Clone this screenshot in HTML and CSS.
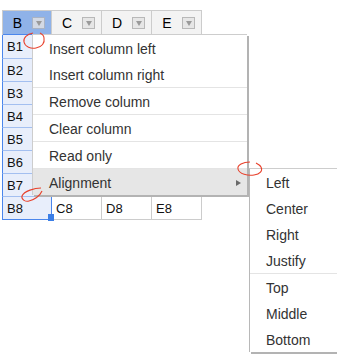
FILE: index.html
```html
<!DOCTYPE html>
<html lang="en">
<head>
    <meta charset="UTF-8">
    <meta name="viewport" content="width=device-width, initial-scale=1.0">
    <title>Sheet column menu</title>
    <link rel="stylesheet" href="styles.css">
</head>
<body>
    <div class="sheet">
        <div class="grid">
            <div class="head selected"><span>B</span><i class="filter"></i></div>
            <div class="head"><span>C</span><i class="filter"></i></div>
            <div class="head"><span>D</span><i class="filter"></i></div>
            <div class="head"><span>E</span><i class="filter"></i></div>

            <div class="cell sel top">B1</div><div class="cell"></div><div class="cell"></div><div class="cell"></div>
            <div class="cell sel">B2</div><div class="cell"></div><div class="cell"></div><div class="cell"></div>
            <div class="cell sel">B3</div><div class="cell"></div><div class="cell"></div><div class="cell"></div>
            <div class="cell sel">B4</div><div class="cell"></div><div class="cell"></div><div class="cell"></div>
            <div class="cell sel">B5</div><div class="cell"></div><div class="cell"></div><div class="cell"></div>
            <div class="cell sel">B6</div><div class="cell"></div><div class="cell"></div><div class="cell"></div>
            <div class="cell sel">B7</div><div class="cell"></div><div class="cell"></div><div class="cell"></div>
            <div class="cell sel last">B8</div><div class="cell">C8</div><div class="cell">D8</div><div class="cell">E8</div>
        </div>

        <div class="handle"></div>

        <div class="menu">
            <div class="item">Insert column left</div>
            <div class="item sep">Insert column right</div>
            <div class="item sep">Remove column</div>
            <div class="item sep">Clear column</div>
            <div class="item sep">Read only</div>
            <div class="item active">Alignment<b class="arrow"></b></div>
        </div>

        <div class="menu submenu">
            <div class="item">Left</div>
            <div class="item">Center</div>
            <div class="item">Right</div>
            <div class="item sep">Justify</div>
            <div class="item">Top</div>
            <div class="item">Middle</div>
            <div class="item">Bottom</div>
        </div>

        <svg class="marks" width="337" height="363" viewBox="0 0 337 363">
            <path d="M33 33 C27 34 23 38 24 42 C25 47 31 49 36 48 C42 47 45 43 44 38 C44 36 42 34 40 33"/>
            <path d="M41 188 C35 188 24 191 22 196 C21 200 26 202 29 201 C34 200 40 196 42 191"/>
            <path d="M250 162 C243 162 237 165 238 169 C239 174 248 176 254 175 C260 174 263 171 261 167 C260 165 258 164 256 163"/>
        </svg>
    </div>
</body>
</html>
```

FILE: styles.css
```css
body {
    margin: 0;
    overflow: hidden;
    background: #fff;
    font-family: "Liberation Sans", Arial, sans-serif;
}
.sheet {
    position: relative;
    width: 337px;
    height: 363px;
    padding: 10px 0 0 2px;
    box-sizing: border-box;
    overflow: hidden;
}
.grid {
    display: grid;
    grid-template-columns: 49px 50px 50px 50px;
    grid-template-rows: 24px 24px repeat(7, 23px);
    width: max-content;
    border-top: 1px solid #ccc;
    border-left: 1px solid #ccc;
}
.head, .cell {
    box-sizing: border-box;
    border-right: 1px solid #ccc;
    border-bottom: 1px solid #ccc;
}
.head {
    display: flex;
    align-items: center;
    background: #f3f3f3;
    font-size: 14px;
    color: #000;
}
.head span {
    flex: 1;
    text-align: center;
}
.head.selected {
    background: #8fb2e8;
    border-bottom-color: #4a86ec;
}
.filter {
    position: relative;
    width: 13px;
    height: 12px;
    margin-right: 6px;
    box-sizing: border-box;
    border: 1px solid #b8b8b8;
    background: #e6e6e6;
}
.head.selected .filter {
    background: #d3d9e4;
    border-color: #a9b3c4;
}
.filter::after {
    content: "";
    position: absolute;
    left: 3px;
    top: 3px;
    border-left: 3px solid transparent;
    border-right: 3px solid transparent;
    border-top: 5px solid #9a9a9a;
}
.cell {
    display: flex;
    align-items: center;
    padding-left: 4px;
    font-size: 13px;
    color: #111;
}
.cell.sel {
    background: #e8eefb;
    border-right-color: #4a86ec;
    border-bottom-color: #a3bff0;
    margin-left: -1px;
    border-left: 1px solid #4a86ec;
    padding-left: 4px;
    width: 50px;
}
.cell.sel.last {
    border-bottom-color: #4a86ec;
}
.handle {
    position: absolute;
    left: 48px;
    top: 214px;
    width: 6px;
    height: 7px;
    background: #3b7ee6;
}
.menu {
    position: absolute;
    left: 32px;
    top: 34px;
    width: 215px;
    box-sizing: border-box;
    background: #fff;
    border-top: 1px solid #cdcdcd;
    border-left: 1px solid #cdcdcd;
    box-shadow: 2px 2px 0 #b3b3b3;
    font-size: 14px;
    color: #333;
}
.item {
    display: flex;
    align-items: center;
    height: 25px;
    padding: 1px 0 0 16px;
}
.item.sep {
    border-bottom: 1px solid #e4e4e4;
}
.item.active {
    background: #e6e6e6;
}
.arrow {
    margin-left: auto;
    margin-right: 6px;
    margin-top: 1px;
    border-top: 3px solid transparent;
    border-bottom: 3px solid transparent;
    border-left: 5px solid #6a6a6a;
}
.submenu {
    left: 249px;
    top: 168px;
    width: 88px;
    border-left-color: #b8b8b8;
}
.marks {
    position: absolute;
    left: 0;
    top: 0;
    pointer-events: none;
}
.marks path {
    fill: none;
    stroke: #e8412c;
    stroke-width: 1.1;
}
```
